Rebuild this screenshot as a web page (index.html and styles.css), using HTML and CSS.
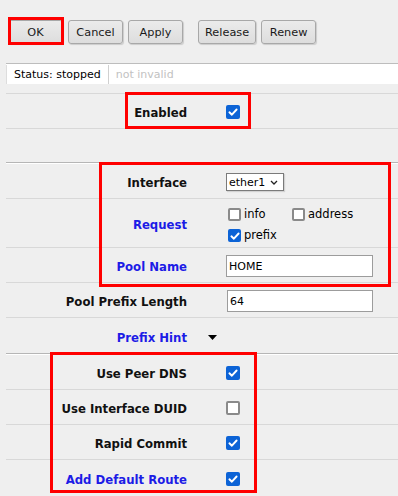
FILE: index.html
```html
<!DOCTYPE html>
<html lang="en">
<head>
    <meta charset="UTF-8" />
    <title>DHCPv6 Client</title>
    <link rel="stylesheet" href="styles.css">
</head>
<body>
    <div class="toolbar">
        <button class="btn">OK</button>
        <button class="btn">Cancel</button>
        <button class="btn btn-apply">Apply</button>
        <button class="btn">Release</button>
        <button class="btn">Renew</button>
    </div>

    <div class="status">
        <span class="status-cell">Status: stopped</span>
        <span class="status-note">not invalid</span>
    </div>

    <div class="form">
        <div class="row">
            <div class="lbl">Enabled</div>
            <div class="val"><span class="cb on"><svg viewBox="0 0 14 14"><path d="M3.4 7.3 L5.9 9.7 L10.6 4.5"/></svg></span></div>
        </div>
        <div class="row row-blank"></div>
        <div class="sep"></div>

        <div class="row">
            <div class="lbl">Interface</div>
            <div class="val">
                <div class="select">
                    <span>ether1</span>
                    <svg class="chev" viewBox="0 0 8 5"><path d="M1 1 L4 4 L7 1"/></svg>
                </div>
            </div>
        </div>
        <div class="row row-tall">
            <div class="lbl blue">Request</div>
            <div class="val">
                <div class="opts">
                    <label class="opt"><span class="cb"></span>info</label>
                    <label class="opt"><span class="cb"></span>address</label>
                    <label class="opt"><span class="cb on"><svg viewBox="0 0 14 14"><path d="M3.4 7.3 L5.9 9.7 L10.6 4.5"/></svg></span>prefix</label>
                </div>
            </div>
        </div>
        <div class="row">
            <div class="lbl blue">Pool Name</div>
            <div class="val"><input class="txt" type="text" value="HOME"></div>
        </div>
        <div class="row">
            <div class="lbl">Pool Prefix Length</div>
            <div class="val"><input class="txt txt-short" type="text" value="64"></div>
        </div>
        <div class="row last">
            <div class="lbl blue">Prefix Hint</div>
            <div class="val"><svg class="hint-arrow" viewBox="0 0 9 5"><polygon points="0,0 9,0 4.5,5"/></svg></div>
        </div>
        <div class="sep"></div>

        <div class="row">
            <div class="lbl">Use Peer DNS</div>
            <div class="val"><span class="cb on"><svg viewBox="0 0 14 14"><path d="M3.4 7.3 L5.9 9.7 L10.6 4.5"/></svg></span></div>
        </div>
        <div class="row">
            <div class="lbl">Use Interface DUID</div>
            <div class="val"><span class="cb"></span></div>
        </div>
        <div class="row">
            <div class="lbl">Rapid Commit</div>
            <div class="val"><span class="cb on"><svg viewBox="0 0 14 14"><path d="M3.4 7.3 L5.9 9.7 L10.6 4.5"/></svg></span></div>
        </div>
        <div class="row last">
            <div class="lbl blue">Add Default Route</div>
            <div class="val"><span class="cb on"><svg viewBox="0 0 14 14"><path d="M3.4 7.3 L5.9 9.7 L10.6 4.5"/></svg></span></div>
        </div>
    </div>

    <!-- red highlight boxes -->
    <div class="mark mark-ok"></div>
    <div class="mark mark-enabled"></div>
    <div class="mark mark-iface"></div>
    <div class="mark mark-opts"></div>
</body>
</html>
```

FILE: styles.css
```css
* {
    margin: 0;
    padding: 0;
    box-sizing: border-box;
}

body {
    position: relative;
    width: 398px;
    height: 496px;
    overflow: hidden;
    background-color: #efefef;
    color: #000;
    font-family: "DejaVu Sans", Verdana, sans-serif;
    font-size: 11px;
}

.toolbar {
    display: flex;
    align-items: center;
    gap: 5px;
    height: 63px;
    padding: 1px 0 0 8px;
}

.btn {
    height: 24px;
    min-width: 55px;
    padding: 0 6px;
    font-family: "DejaVu Sans", Verdana, sans-serif;
    font-size: 11.3px;
    color: #1a1a1a;
    background: linear-gradient(#ebebeb, #dddddd);
    border: 1px solid #a8a8a8;
    border-radius: 3px;
    box-shadow: 1px 1px 1px rgba(0, 0, 0, 0.15);
}

.btn-apply {
    margin-right: 10px;
}

.status {
    display: flex;
    height: 21px;
    margin-left: 6px;
    padding-top: 1px;
    line-height: 20px;
    background-color: #fff;
    border-top: 1px solid #bdbdbd;
}

.status-cell {
    padding: 0 7px;
    border-left: 1px solid #dddddd;
    border-right: 1px solid #d0d0d0;
}

.status-note {
    padding-left: 7px;
    color: #c2c2c2;
}

.form {
    margin: 9px 0 0 6px;
    border-top: 1px solid #d8d8d8;
}

.row {
    display: grid;
    grid-template-columns: 181px 1fr;
    column-gap: 39px;
    align-items: center;
    height: 35px;
    padding-top: 2px;
    border-bottom: 1px solid #d8d8d8;
}

.row.last {
    border-bottom: none;
}

.row-blank {
    height: 33px;
    border-bottom: none;
}

.row-tall {
    height: 49px;
}

.sep {
    height: 2px;
    border-top: 1px solid #b6b6b6;
    border-bottom: 1px solid #fff;
}

.lbl {
    padding-top: 2px;
    text-align: right;
    font-size: 11.7px;
    font-weight: bold;
    color: #111;
}

.lbl.blue {
    color: #1c1ce6;
}

.val {
    display: flex;
    align-items: center;
}

.cb {
    display: inline-block;
    width: 14px;
    height: 14px;
    border: 2px solid #8a8a8a;
    border-radius: 2px;
    background-color: #fff;
}

.cb.on {
    border: none;
    background-color: #0c63d6;
}

.cb svg {
    display: block;
    width: 14px;
    height: 14px;
}

.cb svg path {
    fill: none;
    stroke: #fff;
    stroke-width: 1.9;
    stroke-linecap: round;
    stroke-linejoin: round;
}

.opts {
    display: grid;
    grid-template-columns: 64px auto;
    row-gap: 7px;
    padding-top: 1px;
    margin-left: 2px;
    font-size: 11.5px;
}

.opt {
    display: flex;
    align-items: center;
    gap: 3px;
}

.opts .cb {
    width: 13px;
    height: 13px;
}

.select {
    display: flex;
    align-items: center;
    justify-content: space-between;
    width: 58px;
    height: 18px;
    padding: 0 5px 0 2px;
    background-color: #fff;
    border: 1px solid #7a7a7a;
    box-shadow: 1px 1px 1px rgba(0, 0, 0, 0.12);
}

.chev {
    width: 8px;
    height: 5px;
}

.chev path {
    fill: none;
    stroke: #222;
    stroke-width: 1.3;
}

.txt {
    width: 147px;
    height: 22px;
    padding: 0 2px;
    font-family: "DejaVu Sans", Verdana, sans-serif;
    font-size: 11px;
    color: #000;
    background-color: #fff;
    border: 1px solid #9c9c9c;
    outline: none;
}

.txt-short {
    width: 146px;
    margin-left: 1px;
}

.hint-arrow {
    width: 9px;
    height: 5px;
    margin-left: -18px;
    margin-top: 1px;
}

.mark {
    position: absolute;
    border: 3px solid #ff0000;
}

.mark-ok {
    left: 8px;
    top: 17px;
    width: 56px;
    height: 28px;
}

.mark-enabled {
    left: 125px;
    top: 92px;
    width: 126px;
    height: 37px;
}

.mark-iface {
    left: 99px;
    top: 162px;
    width: 292px;
    height: 125px;
}

.mark-opts {
    left: 50px;
    top: 352px;
    width: 207px;
    height: 141px;
}
```
